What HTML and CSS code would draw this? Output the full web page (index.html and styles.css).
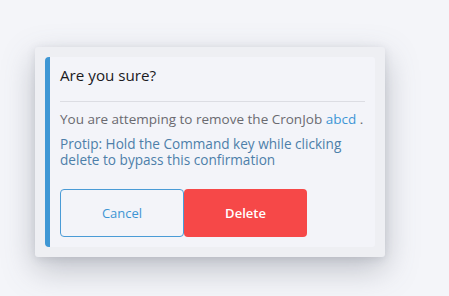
FILE: index.html
```html
<!DOCTYPE html>
<html>
<head>
<meta charset="utf-8">
<link rel="stylesheet" href="styles.css">
</head>
<body>
<div class="stage">
  <div class="panel">
    <div class="card">
      <div class="title">Are you sure?</div>
      <div class="divider"></div>
      <p class="message">You are attemping to remove the CronJob <span class="name">abcd</span> .</p>
      <p class="protip">Protip: Hold the Command key while clicking delete to bypass this confirmation</p>
      <div class="actions">
        <button class="btn btn-cancel">Cancel</button>
        <button class="btn btn-delete">Delete</button>
      </div>
    </div>
  </div>
</div>
</body>
</html>
```
FILE: styles.css
```css
html, body {
  margin: 0;
  padding: 0;
  background: #f4f5f9;
  font-family: "Open Sans", "Noto Sans", sans-serif;
}
.stage {
  width: 449px;
  height: 296px;
  padding: 47px 0 0 35px;
  box-sizing: border-box;
}
.panel {
  width: 350px;
  box-sizing: border-box;
  padding: 10px;
  background: #eeeff3;
  border-radius: 3px;
  box-shadow: 0 12px 32px rgba(90, 95, 110, 0.35), 0 2px 8px rgba(90, 95, 110, 0.15);
}
.card {
  background: #f3f4f9;
  border-left: 5px solid #3f97d4;
  border-radius: 4px 3px 3px 4px;
  padding: 8px 10px 10px 10px;
}
.title {
  font-size: 15.2px;
  line-height: 20px;
  color: #1a1a1e;
  padding-bottom: 16px;
}
.divider {
  height: 1px;
  background: #dcdde3;
}
.message {
  margin: 8px 0 0 0;
  font-size: 13.5px;
  line-height: 18px;
  color: #6a6a70;
}
.name {
  color: #3d96d6;
}
.protip {
  margin: 8px 0 0 0;
  font-size: 13.6px;
  line-height: 16px;
  color: #4d7fa9;
  width: 300px;
}
.actions {
  display: flex;
  margin-top: 21px;
}
.btn {
  width: 124px;
  height: 48px;
  border-radius: 4px;
  font-family: inherit;
  font-size: 13px;
  padding: 0;
  cursor: pointer;
}
.btn-cancel {
  background: transparent;
  border: 1px solid #4a9bd6;
  color: #3d94d4;
}
.btn-delete {
  width: 123px;
  background: #f64848;
  border: none;
  color: #ffffff;
  font-weight: 600;
}
```
